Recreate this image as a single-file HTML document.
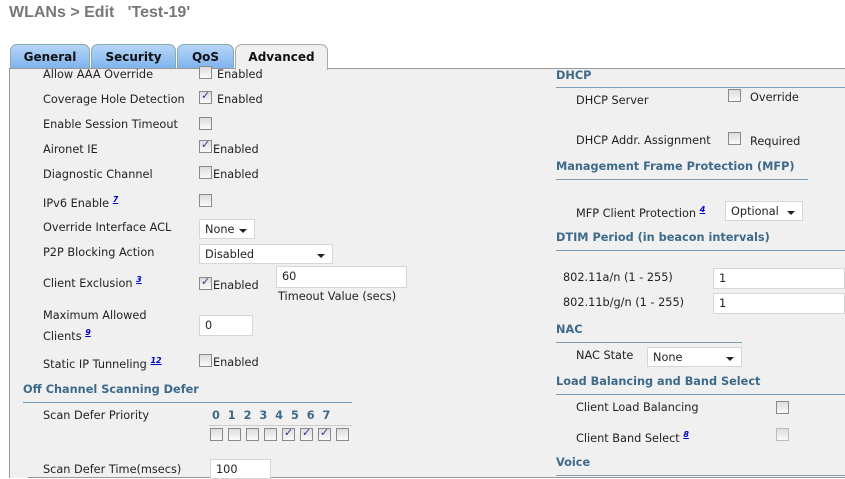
<!DOCTYPE html>
<html><head><meta charset="utf-8"><style>
body{margin:0;width:845px;height:479px;overflow:hidden;background:#fff;font-family:"DejaVu Sans","Liberation Sans",sans-serif;font-size:11.3px;color:#222;position:relative}
.a{position:absolute;white-space:nowrap}
.h{position:absolute;font-weight:bold;color:#3d6a8a;font-size:11.3px;white-space:nowrap}
.hl{position:absolute;height:1px;background:#7a9db5}
.cb{position:absolute;width:13px;height:13px;border:1px solid #8a8a8a;background:linear-gradient(#dcdcdc,#fafafa);box-sizing:border-box}
.cb.c::after{content:"✓";position:absolute;left:1px;top:-3px;font-size:11px;color:#2a3a8a;font-weight:bold}
.in{position:absolute;background:#fff;border:1px solid #d6d6d6;box-sizing:border-box;padding:3px 5px;font-size:11.3px}
.sel::after{content:"";position:absolute;right:7px;top:9px;border-left:4px solid transparent;border-right:4px solid transparent;border-top:4px solid #222}
sup{color:#00c;text-decoration:underline;font-style:italic;font-weight:bold;font-size:8px}
.tab{position:absolute;top:44px;height:24px;border:1px solid #8aa;border-bottom:none;border-radius:7px 7px 0 0;background:linear-gradient(#b6d6f8,#7fb3ee);font-weight:bold;font-size:12px;text-align:center;line-height:24px;box-sizing:border-box;color:#111}
</style></head><body>
<div class="a" style="left:9px;top:4px;font-family:'Liberation Sans',sans-serif;font-weight:bold;font-size:16px;color:#777">WLANs &gt; Edit &nbsp; 'Test-19'</div>
<div style="position:absolute;left:9px;top:68px;width:836px;height:409px;background:#f0f0f0;border-left:1px solid #999;border-top:1px solid #999"></div>
<div style="position:absolute;left:28px;top:477px;width:817px;height:1px;background:#999"></div>
<div class="tab" style="left:10px;width:80px">General</div>
<div class="tab" style="left:91px;width:85px">Security</div>
<div class="tab" style="left:177px;width:57px">QoS</div>
<div class="tab" style="left:235px;width:93px;height:26px;background:#f0f0f0;border-color:#aaa;top:44px">Advanced</div>

<div class="a" style="left:43px;top:68px">Allow AAA Override</div><div class="cb" style="left:199px;top:66px"></div><div class="a" style="left:217px;top:68px">Enabled</div>
<div class="a" style="left:43px;top:93px">Coverage Hole Detection</div><div class="cb c" style="left:199px;top:91px"></div><div class="a" style="left:217px;top:93px">Enabled</div>
<div class="a" style="left:43px;top:118px">Enable Session Timeout</div><div class="cb" style="left:199px;top:117px"></div>
<div class="a" style="left:43px;top:143px">Aironet IE</div><div class="cb c" style="left:199px;top:140px"></div><div class="a" style="left:213px;top:143px">Enabled</div>
<div class="a" style="left:43px;top:168px">Diagnostic Channel</div><div class="cb" style="left:199px;top:166px"></div><div class="a" style="left:213px;top:168px">Enabled</div>
<div class="a" style="left:43px;top:195px">IPv6 Enable <sup>7</sup></div><div class="cb" style="left:199px;top:194px"></div>
<div class="a" style="left:43px;top:221px">Override Interface ACL</div><div class="in sel" style="left:199px;top:219px;width:56px;height:20px">None</div>
<div class="a" style="left:43px;top:246px">P2P Blocking Action</div><div class="in sel" style="left:199px;top:244px;width:134px;height:20px">Disabled</div>
<div class="a" style="left:43px;top:275px">Client Exclusion <sup>3</sup></div><div class="cb c" style="left:199px;top:277px"></div><div class="a" style="left:213px;top:279px">Enabled</div>
<div class="in" style="left:276px;top:266px;width:131px;height:22px">60</div><div class="a" style="left:278px;top:290px">Timeout Value (secs)</div>
<div class="a" style="left:43px;top:309px">Maximum Allowed</div><div class="a" style="left:43px;top:328px">Clients <sup>9</sup></div>
<div class="in" style="left:199px;top:315px;width:54px;height:21px">0</div>
<div class="a" style="left:43px;top:356px">Static IP Tunneling <sup>12</sup></div><div class="cb" style="left:199px;top:354px"></div><div class="a" style="left:213px;top:356px">Enabled</div>
<div class="h" style="left:23px;top:383px">Off Channel Scanning Defer</div><div class="hl" style="left:23px;top:402px;width:329px"></div>
<div class="a" style="left:43px;top:409px">Scan Defer Priority</div>
<div class="a" style="left:212px;top:409px;font-weight:bold;color:#3d6a8a;word-spacing:4px">0 1 2 3 4 5 6 7</div>
<div class="hl" style="left:209px;top:425px;width:143px;background:#ccc"></div>
<div class="cb" style="left:210px;top:428px"></div><div class="cb" style="left:228px;top:428px"></div><div class="cb" style="left:246px;top:428px"></div><div class="cb" style="left:264px;top:428px"></div><div class="cb c" style="left:282px;top:428px"></div><div class="cb c" style="left:300px;top:428px"></div><div class="cb c" style="left:318px;top:428px"></div><div class="cb" style="left:336px;top:428px"></div>
<div class="a" style="left:43px;top:463px">Scan Defer Time(msecs)</div><div class="in" style="left:210px;top:459px;width:61px;height:20px">100</div>

<div class="h" style="left:556px;top:69px">DHCP</div><div class="hl" style="left:556px;top:87px;width:289px"></div>
<div class="a" style="left:576px;top:94px">DHCP Server</div><div class="cb" style="left:728px;top:89px"></div><div class="a" style="left:750px;top:91px">Override</div>
<div class="a" style="left:576px;top:134px">DHCP Addr. Assignment</div><div class="cb" style="left:728px;top:132px"></div><div class="a" style="left:750px;top:135px">Required</div>
<div class="h" style="left:556px;top:160px">Management Frame Protection (MFP)</div><div class="hl" style="left:556px;top:179px;width:252px"></div>
<div class="a" style="left:576px;top:205px">MFP Client Protection <sup>4</sup></div><div class="in sel" style="left:725px;top:201px;width:78px;height:20px">Optional</div>
<div class="h" style="left:556px;top:231px">DTIM Period (in beacon intervals)</div><div class="hl" style="left:556px;top:250px;width:289px"></div>
<div class="a" style="left:563px;top:271px">802.11a/n (1 - 255)</div><div class="in" style="left:713px;top:268px;width:132px;height:21px">1</div>
<div class="a" style="left:563px;top:296px">802.11b/g/n (1 - 255)</div><div class="in" style="left:713px;top:293px;width:132px;height:21px">1</div>
<div class="h" style="left:556px;top:323px">NAC</div><div class="hl" style="left:556px;top:342px;width:186px"></div>
<div class="a" style="left:576px;top:349px">NAC State</div><div class="in sel" style="left:647px;top:347px;width:95px;height:20px">None</div>
<div class="h" style="left:556px;top:375px">Load Balancing and Band Select</div><div class="hl" style="left:556px;top:394px;width:289px"></div>
<div class="a" style="left:576px;top:401px">Client Load Balancing</div><div class="cb" style="left:776px;top:401px"></div>
<div class="a" style="left:576px;top:430px">Client Band Select <sup>8</sup></div><div class="cb" style="left:776px;top:428px;border-color:#bbb"></div>
<div class="h" style="left:556px;top:456px">Voice</div><div class="hl" style="left:556px;top:475px;width:289px"></div>
</body></html>
